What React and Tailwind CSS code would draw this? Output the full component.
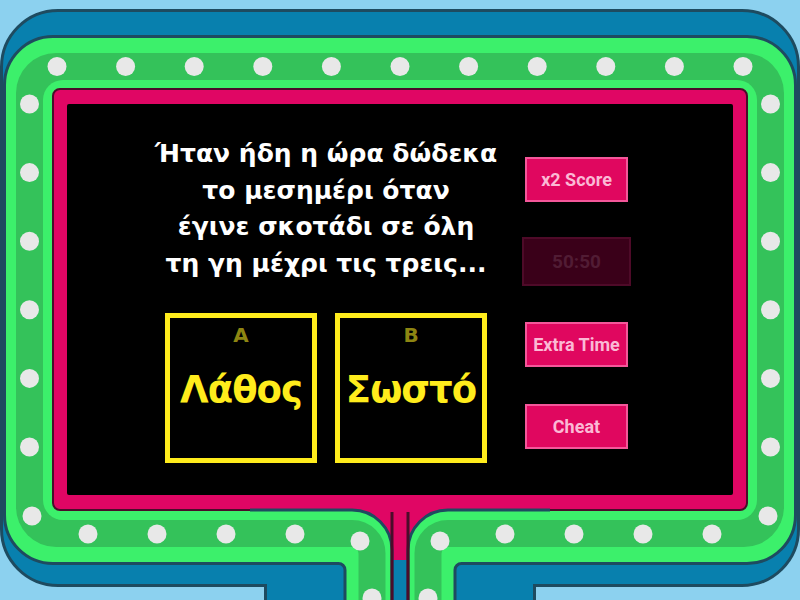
const BRIGHT = "#3cf06b";
const MID = "#34c25a";
const PINK = "#e00664";
const BLUE = "#0880ae";
const OUTLINE = "#1e4b60";
const DARKPINK = "#4a0d2a";
const LIGHT = "#8cd1ef";
const DOT = "#e8e8e8";

function buildDots() {
  const d = [];
  for (let k = 0; k <= 10; k++) d.push([57 + 68.6 * k, 66.5]);
  for (let k = 0; k <= 5; k++) {
    d.push([29.5, 104 + 68.6 * k]);
    d.push([770.5, 104 + 68.6 * k]);
  }
  d.push([32, 516], [768, 516]);
  [88, 157, 226, 295, 505, 574, 643, 712].forEach((x) => d.push([x, 534]));
  d.push([360, 541], [440, 541], [372, 598], [428, 598]);
  return d;
}
const DOTS = buildDots();

function Stand() {
  return (
    <svg
      className="absolute left-[250px] top-[500px]"
      width="300"
      height="100"
      viewBox="250 500 300 100"
    >
      <rect x="250" y="500" width="300" height="100" fill={PINK} />
      <rect x="240" y="560" width="320" height="40" fill={BLUE} />
      <rect x="240" y="584" width="27" height="3" fill={OUTLINE} />
      <rect x="264" y="584" width="3" height="16" fill={OUTLINE} />
      <rect x="240" y="587" width="24" height="13" fill={LIGHT} />
      <rect x="533" y="584" width="27" height="3" fill={OUTLINE} />
      <rect x="533" y="584" width="3" height="16" fill={OUTLINE} />
      <rect x="536" y="587" width="24" height="13" fill={LIGHT} />
      <path
        d="M 240 510 H 352 A 40 40 0 0 1 392 550 V 605 H 345 V 570 A 6.5 6.5 0 0 0 338.5 563.5 H 240 Z"
        fill={BRIGHT}
        stroke={OUTLINE}
        strokeWidth="3"
      />
      <path
        d="M 560 510 H 448 A 40 40 0 0 0 408 550 V 605 H 455 V 570 A 6.5 6.5 0 0 1 461.5 563.5 H 560 Z"
        fill={BRIGHT}
        stroke={OUTLINE}
        strokeWidth="3"
      />
      <path d="M 392 512 V 605" stroke={DARKPINK} strokeWidth="3" />
      <path d="M 408 512 V 605" stroke={DARKPINK} strokeWidth="3" />
      <path
        d="M 240 533.5 H 352 A 20 20 0 0 1 372 553.5 V 605"
        fill="none"
        stroke={MID}
        strokeWidth="27"
      />
      <path
        d="M 560 533.5 H 448 A 20 20 0 0 0 428 553.5 V 605"
        fill="none"
        stroke={MID}
        strokeWidth="27"
      />
    </svg>
  );
}

function Dots() {
  return (
    <svg className="pointer-events-none absolute left-0 top-0" width="800" height="600">
      {DOTS.map(([x, y], i) => (
        <circle key={i} cx={x} cy={y} r="9.5" fill={DOT} />
      ))}
    </svg>
  );
}

function AnswerBox({ letter, text }) {
  return (
    <div className="flex h-[150px] w-[152px] flex-col items-center border-[5px] border-[#ffec1c]">
      <div className="mt-[7px] text-[20px] font-bold leading-none text-[#8d8512]">{letter}</div>
      <div className="mt-[26px] text-[37px] font-bold leading-none tracking-[-1px] text-[#ffec1c]">
        {text}
      </div>
    </div>
  );
}

function PowerButton({ label, disabled }) {
  if (disabled) {
    return (
      <div className="flex h-[49px] w-[109px] items-center justify-center border-2 border-[#4e0a28] bg-[#3a0019] font-['Roboto',sans-serif] text-[19px] font-bold text-[#511c34]">
        {label}
      </div>
    );
  }
  return (
    <div className="flex h-[45px] w-[103px] items-center justify-center border-2 border-[#f4579a] bg-[#e0075f] font-['Roboto',sans-serif] text-[18px] font-bold text-[#fbb9d5]">
      {label}
    </div>
  );
}

export default function App() {
  return (
    <div className="relative h-[600px] w-[800px] overflow-hidden bg-[#8cd1ef] font-['DejaVu_Sans',sans-serif]">
      <div className="pt-[9px]">
        <div className="flex h-[578px] flex-col rounded-[58px] border-[3px] border-[#1e4b60] bg-[#0880ae] pt-[23px] pb-[19px]">
          <div className="flex flex-1 flex-col rounded-[50px] border-[3px] border-[#1e4b60] bg-[#3cf06b] px-[10px] py-[15px]">
            <div className="flex flex-1 flex-col rounded-[40px] bg-[#34c25a] p-[27px]">
              <div className="flex flex-1 flex-col rounded-[20px] bg-[#3cf06b] px-[9px] pt-[8px] pb-[9px]">
                <div className="flex flex-1 flex-col rounded-[8px] border-2 border-[#4a0d2a] bg-[#e00664] px-[13px] py-[14px]">
                  <div className="flex flex-1 rounded-[2px] bg-black pl-[63px]">
                    <div className="flex w-[392px] flex-col items-center pt-[32px]">
                      <div className="text-center text-[25px] font-bold leading-[36.5px] text-white">
                        Ήταν ήδη η ώρα δώδεκα
                        <br />
                        το μεσημέρι όταν
                        <br />
                        έγινε σκοτάδι σε όλη
                        <br />
                        τη γη μέχρι τις τρεις...
                      </div>
                      <div className="mt-[31px] flex gap-[18px]">
                        <AnswerBox letter="A" text="Λάθος" />
                        <AnswerBox letter="B" text="Σωστό" />
                      </div>
                    </div>
                    <div className="flex w-[109px] flex-col pt-[34px]">
                      <div className="flex h-[82.5px] items-center justify-center">
                        <PowerButton label="x2 Score" />
                      </div>
                      <div className="flex h-[82.5px] items-center justify-center">
                        <PowerButton label="50:50" disabled />
                      </div>
                      <div className="flex h-[82.5px] items-center justify-center">
                        <PowerButton label="Extra Time" />
                      </div>
                      <div className="flex h-[82.5px] items-center justify-center">
                        <PowerButton label="Cheat" />
                      </div>
                    </div>
                  </div>
                </div>
              </div>
            </div>
          </div>
        </div>
      </div>
      <Stand />
      <Dots />
    </div>
  );
}
